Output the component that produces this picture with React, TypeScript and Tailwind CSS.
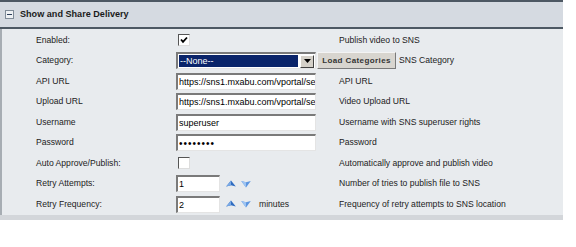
import React from "react";

const inputCls =
  "h-[17px] bg-white border-t-[2px] border-l-[2px] border-t-[#7a7a7a] border-l-[#7a7a7a] border-b border-r border-b-[#e4e4e4] border-r-[#e4e4e4] pl-[1px] pr-0 py-0 text-[9px] text-black outline-none";

const Inp = ({ value, w = "w-[140px]", pw = false }: { value: string; w?: string; pw?: boolean }) => (
  <input
    readOnly
    type={pw ? "password" : "text"}
    value={value}
    className={`${w} ${inputCls} ${pw ? "tracking-[1px] text-[10px]" : ""}`}
    style={{ fontFamily: '"Liberation Sans", Arial, sans-serif' }}
  />
);

const Check = ({ checked }: { checked?: boolean }) => (
  <div className="ml-[2px] w-[12px] h-[12px] bg-white border-t border-l border-t-[#555] border-l-[#555] border-b border-r border-b-[#ddd] border-r-[#ddd] flex items-center justify-center">
    {checked && (
      <svg width="8" height="8" viewBox="0 0 8 8">
        <path d="M1 3.5 L3 5.8 L7 1.5" stroke="#000" strokeWidth="1.8" fill="none" />
      </svg>
    )}
  </div>
);

const Arrow = ({ up }: { up?: boolean }) => (
  <svg width="10" height="8" viewBox="0 0 10 8">
    {up ? (
      <>
        <path d="M5 0.5 L9.8 6.5 L5 5.3 L0.2 6.5 Z" fill="#2f6cc0" />
        <path d="M5 0.5 L0.2 6.5 L5 5.3 Z" fill="#79a9e6" />
      </>
    ) : (
      <>
        <path d="M0.2 1 L5 2.2 L9.8 1 L5 7.5 Z" fill="#5d96e0" />
        <path d="M0.2 1 L5 2.2 L5 7.5 Z" fill="#9ec4f2" />
      </>
    )}
  </svg>
);

const Spin = () => (
  <div className="flex items-center gap-[5px] ml-[6px]">
    <Arrow up />
    <Arrow />
  </div>
);

const Row = ({ label, control, desc, wide }: { label: string; control: React.ReactNode; desc: string; wide?: boolean }) => (
  <div className="flex items-center h-[20.5px]">
    <div className="w-[140px] shrink-0 whitespace-nowrap">{label}</div>
    <div className={`${wide ? "" : "w-[163px]"} shrink-0 flex items-center`}>{control}</div>
    <div className="whitespace-nowrap">{desc}</div>
  </div>
);

export default function App() {
  return (
    <div className="w-[576px] h-[247px] bg-white" style={{ fontFamily: '"Liberation Sans", Arial, sans-serif' }}>
      <div className="w-[563px]">
        <div className="h-[2px] bg-[#4d5863]" />
        <div className="h-[25px] bg-[#d5dae1] flex items-center pl-[5px]">
          <div className="w-[9px] h-[9px] border border-[#7f8b98] bg-[#eef1f4] flex items-center justify-center mr-[6px]">
            <div className="w-[5px] h-[1px] bg-[#2c3f5a]" />
          </div>
          <span className="text-[9.1px] font-bold text-[#1a1a1a]">Show and Share Delivery</span>
        </div>
        <div className="h-[2px] bg-[#4d5863]" />
        <div className="bg-[#e8ebee] border-l-[2px] border-l-[#a7adb3] pl-[34px] pt-[1px] text-[8.6px] text-[#222]">
          <Row label="Enabled:" control={<Check checked />} desc="Publish video to SNS" />
          <Row
            label="Category:"
            wide
            control={
              <div className="flex items-center">
                <div className="w-[140px] h-[17px] bg-white border-t-[2px] border-l-[2px] border-t-[#7a7a7a] border-l-[#7a7a7a] border-b border-r border-b-[#e4e4e4] border-r-[#e4e4e4] flex items-center">
                  <div className="flex-1 h-[12px] ml-[1px] bg-[#0a246a] text-white text-[9px] leading-[12px] pl-[1px]">--None--</div>
                  <div className="w-[14px] h-[13px] ml-[2px] mr-[1px] bg-[#d4d0c8] border border-t-white border-l-white border-b-[#404040] border-r-[#404040] flex items-center justify-center">
                    <svg width="7" height="4" viewBox="0 0 7 4"><path d="M0 0 L7 0 L3.5 4 Z" fill="#000" /></svg>
                  </div>
                </div>
                <div className="ml-[1px] w-[79px] h-[17px] bg-[#d8d5cf] border border-t-[#f4f4f4] border-l-[#f4f4f4] border-b-[#7a7a7a] border-r-[#7a7a7a] flex items-center justify-center text-[8px] tracking-[0.4px] font-semibold text-[#333] whitespace-nowrap">
                  Load Categories
                </div>
                <div className="w-[3px]" />
              </div>
            }
            desc="SNS Category"
          />
          <Row label="API URL" control={<Inp value="https://sns1.mxabu.com/vportal/services" />} desc="API URL" />
          <Row label="Upload URL" control={<Inp value="https://sns1.mxabu.com/vportal/services" />} desc="Video Upload URL" />
          <Row label="Username" control={<Inp value="superuser" />} desc="Username with SNS superuser rights" />
          <Row label="Password" control={<Inp value="password" pw />} desc="Password" />
          <Row label="Auto Approve/Publish:" control={<Check />} desc="Automatically approve and publish video" />
          <Row label="Retry Attempts:" control={<><Inp value="1" w="w-[44px]" /><Spin /></>} desc="Number of tries to publish file to SNS" />
          <Row
            label="Retry Frequency:"
            control={<><Inp value="2" w="w-[44px]" /><Spin /><span className="ml-[8px]">minutes</span></>}
            desc="Frequency of retry attempts to SNS location"
          />
        </div>
        <div className="h-[5px] bg-[#d3d6da]" />
      </div>
    </div>
  );
}
